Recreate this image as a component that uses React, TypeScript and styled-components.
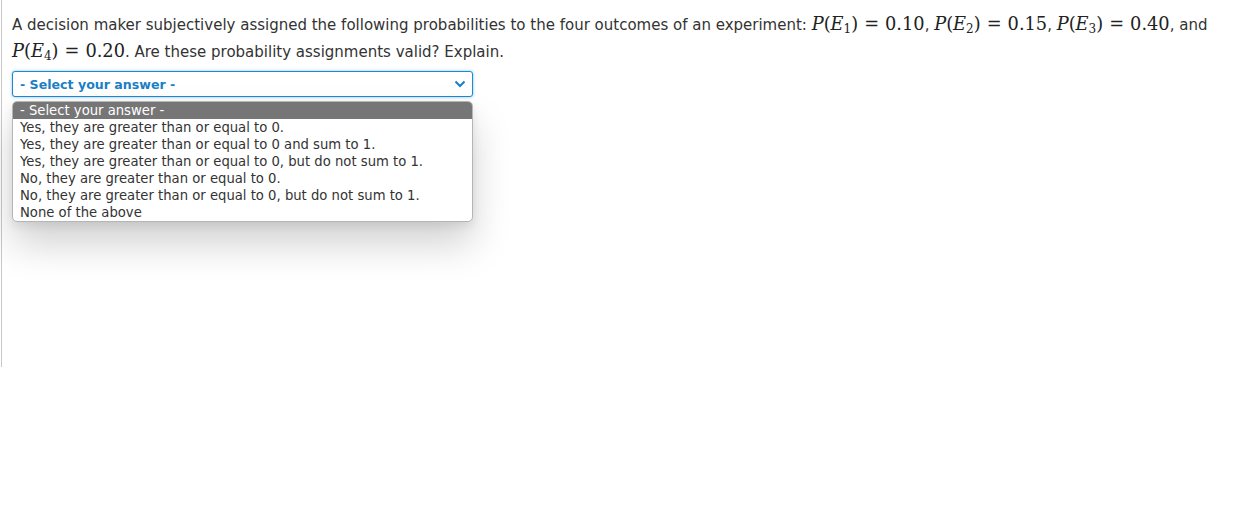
import React from 'react'
import styled, { createGlobalStyle } from 'styled-components'

const GlobalStyle = createGlobalStyle`
html, body {
  margin: 0;
  padding: 0;
  background: #ffffff;
}
`

const Page = styled.div`
box-sizing: border-box;
margin-left: 1px;
border-left: 1px solid #c9c9c9;
min-height: 367px;
padding: 11px 0 0 10px;
font-family: "DejaVu Sans", Verdana, sans-serif;
color: #333333;
`

const Question = styled.p`
margin: 0;
font-size: 15px;
line-height: 26px;
width: 1215px;
`

const M = styled.span`
font-family: "DejaVu Serif", "Liberation Serif", serif;
font-size: 17.8px;
color: #222222;
white-space: nowrap;
`

const I = styled.i`
font-style: italic;
`

const Eq = styled.span`
margin: 0 6px;
`

const Sub = styled.sub`
font-size: 12px;
vertical-align: -3px;
line-height: 0;
`

const SelectWrap = styled.div`
position: relative;
width: 461px;
margin-top: 6px;
`

const SelectBox = styled.div`
box-sizing: border-box;
height: 26px;
border: 1px solid #1a8ad4;
border-radius: 3px;
box-shadow: 0 0 3px rgba(26, 138, 212, 0.55);
display: flex;
align-items: center;
justify-content: space-between;
padding: 0 6px 0 7px;
font-size: 12.6px;
font-weight: bold;
color: #1a7fc4;
background: #fff;
`

const Menu = styled.ul`
position: absolute;
top: 30px;
left: 0;
width: 461px;
box-sizing: border-box;
margin: 0;
padding: 0;
list-style: none;
background: #fff;
border: 1px solid #b5b5b5;
border-radius: 5px;
overflow: hidden;
box-shadow: 0 22px 38px rgba(0, 0, 0, 0.18), 0 4px 10px rgba(0, 0, 0, 0.08);
`

const Option = styled.li<{ $active?: boolean }>`
height: 17px;
line-height: 17px;
padding: 0 7px;
font-size: 13.2px;
color: ${p => (p.$active ? '#ffffff' : '#333333')};
background: ${p => (p.$active ? '#767676' : 'transparent')};
white-space: nowrap;
`

const options = [
  '- Select your answer -',
  'Yes, they are greater than or equal to 0.',
  'Yes, they are greater than or equal to 0 and sum to 1.',
  'Yes, they are greater than or equal to 0, but do not sum to 1.',
  'No, they are greater than or equal to 0.',
  'No, they are greater than or equal to 0, but do not sum to 1.',
  'None of the above',
]

function P({ n, v }: { n: number; v: string }) {
  return (
    <M>
      <I>P</I>(<I>E</I>
      <Sub>{n}</Sub>)<Eq>=</Eq>{v}
    </M>
  )
}

export default function App(): JSX.Element {
  return (
    <Page>
      <GlobalStyle />
      <Question>
        A decision maker subjectively assigned the following probabilities to the four outcomes of an experiment:{' '}
        <P n={1} v="0.10" />, <P n={2} v="0.15" />, <P n={3} v="0.40" />, and <P n={4} v="0.20" />. Are these
        probability assignments valid? Explain.
      </Question>
      <SelectWrap>
        <SelectBox>
          <span>- Select your answer -</span>
          <svg width="12" height="8" viewBox="0 0 12 8">
            <path d="M1.5 1.5 L6 6 L10.5 1.5" fill="none" stroke="#1a7fc4" strokeWidth="2" />
          </svg>
        </SelectBox>
        <Menu>
          {options.map((o, i) => (
            <Option key={o} $active={i === 0}>
              {o}
            </Option>
          ))}
        </Menu>
      </SelectWrap>
    </Page>
  )
}
